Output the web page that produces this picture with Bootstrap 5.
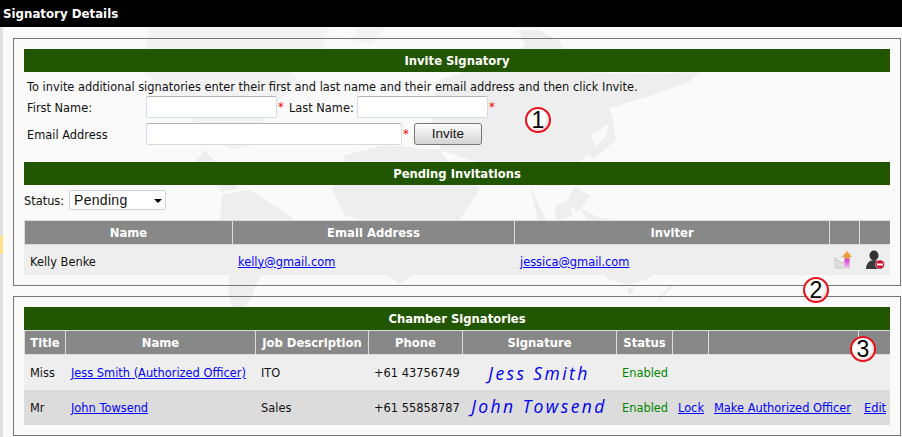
<!DOCTYPE html>
<html lang="en">
<head>
  <meta charset="UTF-8" />
  <meta name="viewport" content="width=device-width, initial-scale=1.0"/>
  <title>Signatory Details</title>
  <link href="https://cdn.jsdelivr.net/npm/bootstrap@5.3.0/dist/css/bootstrap.min.css" rel="stylesheet">
  <style>
    body { background: #fafafa; color: #111; font: 11.4px/14px "DejaVu Sans", Verdana, sans-serif; height: 437px; overflow: hidden; }
    .page-title { background: #000; color: #fff; font-weight: 700; font-size: 11.8px; height: 27px; line-height: 29px; padding-left: 3px; }
    .page-body { position: relative; border-left: 3px solid #e0e0e0; padding: 11px 1px 0 10px; height: 410px; }
    .side-tab { position: absolute; left: -3px; top: 208px; width: 3px; height: 19px; background: #ffe08a; }
    .world-map { position: absolute; left: -3px; top: 0; width: 902px; height: 410px; }
    .sig-panel { position: relative; border: 1px solid #777; padding: 10px; margin-bottom: 10px; height: 248px; }
    .sig-panel.second { height: 140px; margin-bottom: 0; }
    .band { background: #225500; color: #fff; font-weight: 700; font-size: 11.6px; text-align: center; height: 23px; line-height: 25px; }
    .intro { padding: 8px 0 0 3px; height: 24px; margin: 0; }
    .form-line { display: flex; align-items: center; height: 22px; padding-left: 3px; margin-bottom: 5px; }
    .form-line label { margin: 2px 0 0; }
    .lbl-first { width: 119px; }
    .lbl-last { padding: 0 4px; white-space: nowrap; width: 72px; }
    .sig-input { height: 22px; background: #fff; border: 1px solid #d5dbe6; border-top-color: #b5b5b5; border-radius: 2px; padding: 0 3px; }
    .input-short { width: 131px; }
    .input-long { width: 256px; }
    .req { color: #f00; width: 8px; padding-left: 1px; line-height: 10px; align-self: flex-start; margin-top: 6px; }
    .invite-btn { margin-left: 4px; width: 68px; height: 22px; padding: 0; font: 13.5px/20px "Liberation Sans", Arial, sans-serif; color: #111; background: linear-gradient(#fdfdfd, #d4d4d4); border: 1px solid #777; border-radius: 3px; }
    .invite-btn:hover { color: #111; background: linear-gradient(#fdfdfd, #d4d4d4); border-color: #777; }
    .band.next { margin-top: 17px; }
    .status-line { display: flex; align-items: center; gap: 4px; height: 20px; margin: 5px 0 10px; }
    .status-line label { width: 41px; margin-top: 2px; white-space: nowrap; }
    .select-wrap { position: relative; width: 97px; height: 20px; }
    .select-wrap::after { content: ""; position: absolute; right: 4px; top: 9px; border: 4px solid transparent; border-top: 4px solid #000; border-bottom: 0; pointer-events: none; }
    .sig-select { appearance: none; width: 100%; height: 20px; background: #fff; border: 1px solid #ccd3de; border-radius: 2px; padding: 0 4px; font: 14px/18px "Liberation Sans", Arial, sans-serif; letter-spacing: .3px; color: #111; }
    .sig-grid.table { width: 866px; table-layout: fixed; margin: 0; color: #111; border-collapse: separate; border-spacing: 0; }
    .sig-grid.table th { background: #888; color: #fff; font-weight: 700; font-size: 11.6px; text-align: center; vertical-align: middle; height: 25px; padding: 0; border: 0; border-top: 1px solid #ddd; border-left: 1px solid #ddd; border-bottom: 1px solid #ddd; white-space: nowrap; box-shadow: none; }
    .sig-grid.table td { background: #eee; border: 0; padding: 1px 0 0 6px; vertical-align: middle; white-space: nowrap; box-shadow: none; color: #111; }
    .sig-grid.table tr.alt td { background: #dcdcdc; }
    .sig-grid.invites td { height: 30px; }
    .sig-grid.table.invites td { padding-top: 3px; }
    .sig-grid.people td { height: 35px; }
    .sig-grid a { color: #00f; }
    .sig-grid.table td.enabled { color: #080; }
    .sig-grid.table.invites td.icon-cell { padding: 0; text-align: center; }
    .sig-grid.table td.sign { padding: 0; text-align: center; color: #00e; font: italic 500 17.5px/20px "Open Sans", sans-serif; letter-spacing: 2.4px; }
    .sig-grid.table tr.alt td.sign { padding-bottom: 4px; }
    .w-a { width: 208px; } .w-b { width: 282px; } .w-c { width: 315px; } .w-d { width: 30px; } .w-e { width: 31px; }
    .w-title { width: 41px; } .w-name { width: 190px; } .w-job { width: 113px; } .w-phone { width: 94px; }
    .w-sign { width: 154px; } .w-status { width: 56px; } .w-lock { width: 36px; } .w-make { width: 150px; } .w-edit { width: 32px; }
    .callout { position: absolute; width: 26px; height: 26px; border-radius: 50%; border: 2px solid #e8101c; background: radial-gradient(circle at 42% 40%, #fff 50%, #f2a8a8 100%); color: #000; font: 23px/22px "Liberation Sans", Arial, sans-serif; text-align: center; }
    .c-one { left: 512px; top: 69px; }
    .c-two { left: 790px; top: 239px; }
    .c-three { left: 837px; top: 298px; }
    .sig-stack { position: relative; }
  </style>
</head>
<body>
  <div class="page-title">Signatory Details</div>
  <div class="page-body">
    <svg class="world-map" viewBox="0 27 902 410" fill="#eeeeee">
      <g fill="#f3f3f3">
        <path d="M150 27 L330 27 L322 50 L280 62 L300 80 L270 110 L250 145 L232 150 L205 135 L170 95 L140 70 Z"/>
        <path d="M360 27 L385 27 L372 44 L350 40 Z"/>
      </g>
      <path d="M205 150 L238 188 L222 192 L196 160 Z"/>
      <path d="M222 194 L250 190 L292 218 L290 240 L262 272 L250 300 L234 316 L228 290 L232 250 L220 220 Z"/>
      <path d="M332 190 L345 155 L385 145 L440 150 L462 180 L480 188 L450 235 L420 270 L400 284 L385 275 L375 225 L345 215 Z"/>
      <path d="M440 150 L430 110 L440 80 L470 70 L500 62 L525 45 L518 30 L540 30 L560 42 L575 72 L640 74 L700 72 L690 82 L650 96 L610 108 L612 122 L590 135 L598 150 L572 165 L565 186 L540 186 L525 165 L500 178 L490 165 L470 160 Z"/>
      <path d="M612 112 L616 140 L592 160 L590 154 L606 136 Z"/>
      <path d="M575 186 L590 196 L578 212 L566 204 Z"/>
      <path d="M530 186 L548 224 L538 222 Z"/>
      <path d="M555 206 L570 200 L572 216 L556 222 Z"/>
      <path d="M580 208 L600 218 L612 218 L590 224 Z"/>
      <path d="M600 225 L660 225 L668 260 L650 278 L628 285 L606 278 L596 250 Z"/>
      <path d="M676 283 L662 298 L654 304 L668 288 Z"/>
      <path d="M628 288 L634 288 L632 294 L628 294 Z"/>
    </svg>
    <div class="side-tab"></div>

    <div class="sig-stack">
      <div class="sig-panel">
        <div class="band">Invite Signatory</div>
        <p class="intro">To invite additional signatories enter their first and last name and their email address and then click Invite.</p>
        <form>
          <div class="form-line">
            <label class="lbl-first" for="firstName">First Name:</label>
            <input class="sig-input input-short" id="firstName" type="text">
            <span class="req">*</span>
            <label class="lbl-last" for="lastName">Last Name:</label>
            <input class="sig-input input-short" id="lastName" type="text">
            <span class="req">*</span>
          </div>
          <div class="form-line">
            <label class="lbl-first" for="emailAddr">Email Address</label>
            <input class="sig-input input-long" id="emailAddr" type="text">
            <span class="req">*</span>
            <button type="button" class="btn invite-btn">Invite</button>
          </div>
        </form>
        <div class="band next">Pending Invitations</div>
        <div class="status-line">
          <label for="statusSel">Status:</label>
          <div class="select-wrap">
            <select class="sig-select" id="statusSel"><option>Pending</option></select>
          </div>
        </div>
        <table class="table sig-grid invites">
          <thead>
            <tr>
              <th class="w-a">Name</th>
              <th class="w-b">Email Address</th>
              <th class="w-c">Inviter</th>
              <th class="w-d"></th>
              <th class="w-e"></th>
            </tr>
          </thead>
          <tbody>
            <tr>
              <td>Kelly Benke</td>
              <td><a href="#">kelly@gmail.com</a></td>
              <td><a href="#">jessica@gmail.com</a></td>
              <td class="icon-cell">
                <svg width="20" height="20" viewBox="0 0 20 20">
                  <defs>
                    <linearGradient id="arrowFill" x1="0" y1="0" x2="0" y2="1">
                      <stop offset="0" stop-color="#f0a020"/>
                      <stop offset=".4" stop-color="#e8a040"/>
                      <stop offset=".55" stop-color="#e040d8"/>
                      <stop offset="1" stop-color="#f0b0f0"/>
                    </linearGradient>
                  </defs>
                  <path d="M1 8 H15 V18 H1 Z" fill="#dedede" stroke="#cbcbcb"/>
                  <path d="M1 8 L8 13 L15 8" fill="#f4f4f4" stroke="#c4c4c4"/>
                  <path d="M13 1 L18 7 H15.5 V17 H10.5 V7 H8 Z" fill="url(#arrowFill)"/>
                </svg>
              </td>
              <td class="icon-cell">
                <svg width="20" height="20" viewBox="0 0 20 20">
                  <ellipse cx="9" cy="5.5" rx="4.5" ry="5" fill="#333"/>
                  <path d="M1 19 C1 13 5 10 9 10 C13 10 17 13 17 19 Z" fill="#3a3a3a"/>
                  <circle cx="15" cy="14.5" r="4.5" fill="#c8102e" stroke="#eee" stroke-width=".6"/>
                  <rect x="12" y="13.5" width="6" height="2" fill="#fff"/>
                </svg>
              </td>
            </tr>
          </tbody>
        </table>
      </div>

      <div class="sig-panel second">
        <div class="band">Chamber Signatories</div>
        <table class="table sig-grid people">
          <thead>
            <tr>
              <th class="w-title">Title</th>
              <th class="w-name">Name</th>
              <th class="w-job">Job Description</th>
              <th class="w-phone">Phone</th>
              <th class="w-sign">Signature</th>
              <th class="w-status">Status</th>
              <th class="w-lock"></th>
              <th class="w-make"></th>
              <th class="w-edit"></th>
            </tr>
          </thead>
          <tbody>
            <tr>
              <td>Miss</td>
              <td><a href="#">Jess Smith (Authorized Officer)</a></td>
              <td>ITO</td>
              <td>+61 43756749</td>
              <td class="sign">Jess Smith</td>
              <td class="enabled">Enabled</td>
              <td></td>
              <td></td>
              <td></td>
            </tr>
            <tr class="alt">
              <td>Mr</td>
              <td><a href="#">John Towsend</a></td>
              <td>Sales</td>
              <td>+61 55858787</td>
              <td class="sign">John Towsend</td>
              <td class="enabled">Enabled</td>
              <td><a href="#">Lock</a></td>
              <td><a href="#">Make Authorized Officer</a></td>
              <td><a href="#">Edit</a></td>
            </tr>
          </tbody>
        </table>
      </div>

      <div class="callout c-one">1</div>
      <div class="callout c-two">2</div>
      <div class="callout c-three">3</div>
    </div>
  </div>
  <script src="https://cdn.jsdelivr.net/npm/bootstrap@5.3.0/dist/js/bootstrap.bundle.min.js"></script>
</body>
</html>
